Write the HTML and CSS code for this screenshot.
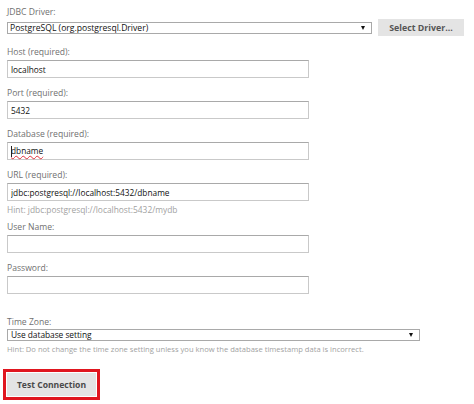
FILE: index.html
```html
<!DOCTYPE html>
<html lang="en">
<head>
<meta charset="utf-8">
<title>Connection</title>
<link rel="stylesheet" href="styles.css">
</head>
<body>
<form class="form">
  <div class="group first">
    <label class="label">JDBC Driver:</label>
    <div class="driver-row">
      <div class="select driver-select">
        <span class="select-text">PostgreSQL (org.postgresql.Driver)</span>
        <span class="arrow"></span>
      </div>
      <button type="button" class="btn btn-driver">Select Driver...</button>
    </div>
  </div>

  <div class="group host">
    <label class="label">Host (required):</label>
    <input class="input" type="text" value="localhost">
  </div>

  <div class="group">
    <label class="label">Port (required):</label>
    <input class="input" type="text" value="5432">
  </div>

  <div class="group">
    <label class="label">Database (required):</label>
    <div class="input input-div"><span class="caret"></span><span class="misspelled">dbname</span></div>
  </div>

  <div class="group">
    <label class="label">URL (required):</label>
    <input class="input" type="text" value="jdbc:postgresql://localhost:5432/dbname">
    <div class="hint url-hint">Hint: jdbc:postgresql://localhost:5432/mydb</div>
  </div>

  <div class="group after-hint">
    <label class="label">User Name:</label>
    <input class="input" type="text" value="">
  </div>

  <div class="group">
    <label class="label">Password:</label>
    <input class="input" type="password" value="">
  </div>

  <div class="group timezone">
    <label class="label tz-label">Time Zone:</label>
    <div class="select tz-select">
      <span class="select-text tz-text">Use database setting</span>
      <span class="arrow"></span>
    </div>
    <div class="hint tz-hint">Hint: Do not change the time zone setting unless you know the database timestamp data is incorrect.</div>
  </div>

  <div class="highlight">
    <button type="button" class="btn btn-test">Test Connection</button>
  </div>
</form>
</body>
</html>
```

FILE: styles.css
```css
* { box-sizing: border-box; }

html, body {
  margin: 0;
  padding: 0;
  background: #ffffff;
}

body {
  font-family: "Open Sans", "DejaVu Sans", sans-serif;
  color: #000;
}

.form {
  display: flex;
  flex-direction: column;
  align-items: flex-start;
  padding: 6px 0 0 7px;
}

.group {
  display: flex;
  flex-direction: column;
  align-items: flex-start;
  margin-top: 9px;
}

.group.first { margin-top: 0; }
.group.host { margin-top: 10px; }
.group.after-hint { margin-top: 5px; }
.group.timezone { margin-top: 22px; }

.label {
  display: block;
  font-size: 8.6px;
  line-height: 12px;
  height: 12px;
  color: #707070;
  margin-bottom: 2px;
}

.tz-label { margin-bottom: 1px; }

.driver-row {
  display: flex;
  align-items: center;
  gap: 6px;
  margin-top: -1px;
}

.select {
  position: relative;
  display: flex;
  align-items: center;
  height: 12px;
  background: #fff;
  border: 1px solid #a9a9a9;
  padding: 0 14px 0 2px;
}

.driver-select { width: 365px; }
.tz-select { width: 413px; }

.select-text {
  font-size: 8.6px;
  line-height: 10px;
  color: #111;
  white-space: nowrap;
}

.tz-text {
  font-size: 8.4px;
  padding-left: 1px;
  letter-spacing: -0.05px;
}

.arrow {
  position: absolute;
  right: 6px;
  top: 3px;
  width: 0;
  height: 0;
  border-left: 2.5px solid transparent;
  border-right: 2.5px solid transparent;
  border-top: 4px solid #111;
}

.btn {
  font-family: "Open Sans", "DejaVu Sans", sans-serif;
  font-weight: bold;
  border: none;
  background: #e4e4e4;
  color: #555;
  padding: 0;
  margin: 0;
  cursor: pointer;
}

.btn-driver {
  width: 86px;
  height: 17px;
  font-size: 8.8px;
}

.input {
  display: block;
  width: 302px;
  height: 18px;
  border: 1px solid #c9c9c9;
  border-top-color: #a9a9a9;
  background: #fff;
  margin: 0;
  padding: 0 0 0 3px;
  font-family: "Open Sans", "DejaVu Sans", sans-serif;
  font-size: 8.3px;
  color: #111;
  outline: none;
}

.input-div {
  display: flex;
  align-items: center;
  position: relative;
}

.caret {
  position: absolute;
  left: 3px;
  top: 3px;
  width: 1px;
  height: 11px;
  background: #222;
}

.misspelled {
  line-height: 12px;
  text-decoration: underline wavy #e0303a;
  text-decoration-thickness: 1px;
  text-underline-offset: 1px;
}

.hint {
  line-height: 12px;
  height: 12px;
  color: #a2a2a2;
  white-space: nowrap;
}

.url-hint {
  font-size: 8.4px;
  margin-top: 3px;
}

.tz-hint {
  font-size: 7.6px;
  margin-top: 2px;
}

.highlight {
  margin: 14px 0 0 -4px;
  border: 3px solid #e0161f;
  padding: 1px;
  display: flex;
}

.btn-test {
  width: 89px;
  height: 23px;
  font-size: 8.6px;
  color: #4a4a4a;
}
```
